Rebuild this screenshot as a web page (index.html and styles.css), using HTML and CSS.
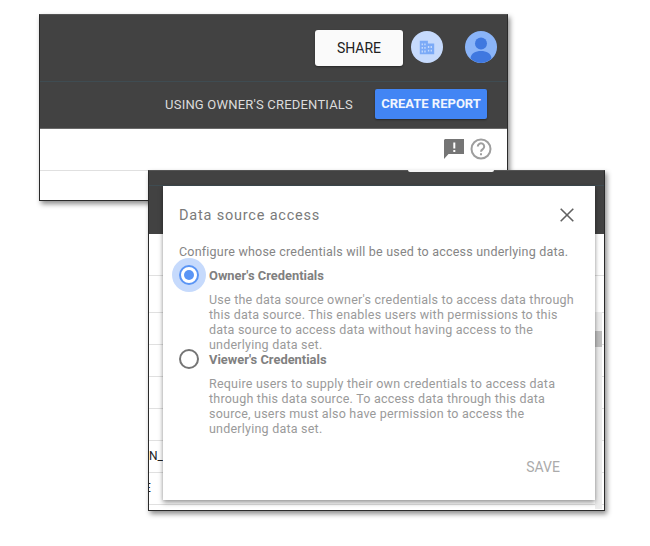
FILE: index.html
```html
<!DOCTYPE html>
<html lang="en">
<head>
<meta charset="utf-8">
<title>Data source access</title>
<link rel="stylesheet" href="styles.css">
</head>
<body>
<section class="window back">
  <div class="bar-top">
    <button class="share">SHARE</button>
    <span class="avatar building">
      <svg viewBox="0 0 20 20" width="18" height="18"><path class="bld" d="M2 3h9v3h7v12H2z"/><path class="bld-cut" d="M4 6h1.500v2H4zM7 6h1.500v2H7zM4 10h1.500v2H4zM7 10h1.500v2H7zM4 14h1.500v2H4zM7 14h1.500v2H7zM11 9h1.500v2H11zM14 9h1.500v2H14zM11 13h1.500v2H11zM14 13h1.500v2H14z"/></svg>
    </span>
    <span class="avatar user">
      <svg viewBox="0 0 32 32" width="32" height="32"><circle class="usr" cx="16" cy="12.500" r="6"/><path class="usr" d="M5.500 27.500C6 22 10.500 20 16 20s10 2 10.500 7.500A16 16 0 0 1 16 32a16 16 0 0 1-10.500-4.500z"/></svg>
    </span>
  </div>
  <div class="bar-bottom">
    <span class="cred">USING OWNER'S CREDENTIALS</span>
    <button class="create">CREATE REPORT</button>
  </div>
  <div class="tools">
    <svg viewBox="0 0 20 20" width="20" height="20"><path class="fb" d="M1 0h19v15H4.500L0 20V1z"/><path class="fb-cut" d="M9.300 3.500h2v6h-2zM9.300 11h2v2h-2z"/></svg>
    <svg viewBox="0 0 22 22" width="22" height="22"><circle class="help" cx="11" cy="11" r="9.500"/><path class="help" d="M7.800 8.600a3.200 3.200 0 1 1 5 2.600c-1.200.8-1.800 1.300-1.800 2.600"/><path class="help-dot" d="M10 15.200h2v2h-2z"/></svg>
  </div>
  <div class="back-row"></div>
</section>

<section class="window front">
  <div class="front-head"><span class="sliver"></span><span class="front-rule"></span></div>
  <div class="rows">
    <div class="row r42"></div>
    <div class="row r37"></div>
    <div class="row"></div>
    <div class="row"></div>
    <div class="row"></div>
    <div class="row"></div>
    <div class="row">N_</div>
    <div class="row clipped">E</div>
  </div>
  <div class="scroll"><span class="thumb"></span></div>

  <div class="dialog">
    <header class="d-head">
      <h1>Data source access</h1>
      <svg viewBox="0 0 14 14" width="14" height="14"><path class="close" d="M.7.700l12.600 12.600M13.300.700L.7 13.300"/></svg>
    </header>
    <p class="intro">Configure whose credentials will be used to access underlying data.</p>
    <div class="option first">
      <span class="radio on"><span class="dot"></span></span>
      <div class="o-text">
        <h2>Owner's Credentials</h2>
        <p>Use the data source owner's credentials to access data through this data source. This enables users with permissions to this data source to access data without having access to the underlying data set.</p>
      </div>
    </div>
    <div class="option">
      <span class="radio"></span>
      <div class="o-text">
        <h2>Viewer's Credentials</h2>
        <p>Require users to supply their own credentials to access data through this data source. To access data through this data source, users must also have permission to access the underlying data set.</p>
      </div>
    </div>
    <footer class="d-foot"><span class="save">SAVE</span></footer>
  </div>
</section>
</body>
</html>
```
FILE: styles.css
```css
* { box-sizing: border-box; }
html, body { margin: 0; height: 546px; background: #fff; overflow: hidden; }
body { position: relative; font-family: Roboto, "Liberation Sans", sans-serif; }
h1, h2, p { margin: 0; font-weight: 400; }
button { font-family: inherit; border: 0; padding: 0; }

.window { position: absolute; background: #fff; border: 1px solid #2a2a2a; border-top-color: #555; box-shadow: 2px 3px 5px rgba(0,0,0,.45); }

/* back window */
.back { left: 39px; top: 14px; width: 469px; height: 187px; }
.bar-top { height: 67px; background: #424242; border-bottom: 1px solid #3f4c52; display: flex; align-items: flex-start; justify-content: flex-end; padding: 15px 10px 0 0; }
.share { width: 88px; height: 36px; background: #fafafa; border-radius: 3px; color: #212121; font-size: 14px; line-height: 34px; margin-right: 8px; box-shadow: 0 1px 2px rgba(0,0,0,.4); }
.avatar { width: 32px; height: 32px; border-radius: 50%; display: flex; align-items: center; justify-content: center; margin-top: 1px; overflow: hidden; }
.building { background: #c6dafc; margin-right: 22px; }
.user { background: #8ab4f8; }
.bld { fill: #7baaf7; }
.bld-cut { fill: #c6dafc; }
.usr { fill: #3f78e0; }
.bar-bottom { height: 47px; background: #424242; border-bottom: 1px solid #6a6a6a; display: flex; align-items: flex-start; justify-content: flex-end; padding: 7px 20px 0 0; }
.cred { color: #dcdcdc; font-size: 13px; font-weight: 400; line-height: 31px; margin-right: 22px; letter-spacing: .2px; }
.create { width: 112px; height: 30px; background: #4285f4; color: #f1f5fe; font-size: 13px; font-weight: 700; line-height: 30px; border-radius: 2px; box-shadow: 0 1px 2px rgba(0,0,0,.4); }
.tools { height: 42px; display: flex; align-items: center; justify-content: flex-end; gap: 6px; padding: 0 15px 1px 0; border-bottom: 1px solid #e0e0e0; }
.fb { fill: #757575; }
.fb-cut { fill: #fff; }
.help { fill: none; stroke: #9e9e9e; stroke-width: 2; }
.help-dot { fill: #9e9e9e; }
.back-row { height: 29px; }

/* front window */
.front { left: 148px; top: 170px; width: 457px; height: 341px; }
.front-head { position: relative; height: 63px; background: #424242; }
.sliver { position: absolute; left: 259px; top: -1px; width: 86px; height: 2px; background: #f4f4f4; border-radius: 0 0 2px 2px; }
.front-rule { position: absolute; left: 0; top: 14px; width: 100%; height: 1px; background: #3f4c52; }
.rows { height: 276px; overflow: hidden; }
.row { height: 32px; border-bottom: 1px solid #e0e0e0; font-size: 12px; line-height: 31px; color: #212121; }
.r42 { height: 42px; }
.r37 { height: 37px; }
.clipped { text-indent: -5px; }
.scroll { position: absolute; right: 2px; top: 141px; width: 7px; height: 197px; background: #ececec; }
.thumb { display: block; margin-top: 19px; height: 16px; background: #bdbdbd; }

.dialog { position: absolute; left: 14px; top: 15px; width: 432px; height: 314px; background: #fff; box-shadow: 0 3px 5px rgba(0,0,0,.35), 0 0 3px rgba(0,0,0,.15); padding: 0 0 0 16px; display: flex; flex-direction: column; }
.d-head { height: 58px; flex: none; display: flex; align-items: center; justify-content: space-between; padding: 0 21px 0 0; }
h1 { font-size: 14.500px; color: #7a7a7a; letter-spacing: .8px; }
.close { fill: none; stroke: #616161; stroke-width: 1.600; }
.intro { font-size: 12.500px; line-height: 15px; color: #858585; letter-spacing: .21px; }
.option { display: flex; height: 84px; flex: none; }
.first { margin-top: 8px; }
.radio { position: relative; flex: none; width: 20px; height: 20px; margin: -2px 10px 0 0; border: 2px solid #757575; border-radius: 50%; display: flex; align-items: center; justify-content: center; }
.radio.on { border-color: #5a95f5; box-shadow: 0 0 0 7px #c6dafc; background: #fff; }
.dot { width: 10px; height: 10px; border-radius: 50%; background: #5a95f5; }
.o-text h2 { font-size: 12.900px; line-height: 15px; font-weight: 700; color: #808080; padding-top: 1px; height: 25px; }
.o-text p { font-size: 12.500px; line-height: 15px; color: #9a9a9a; letter-spacing: .22px; width: 372px; }
.d-foot { margin-top: auto; height: 65px; flex: none; display: flex; justify-content: flex-end; padding: 25px 35px 0 0; }
.save { font-size: 14px; font-weight: 400; color: #ababab; line-height: 15px; }
```
